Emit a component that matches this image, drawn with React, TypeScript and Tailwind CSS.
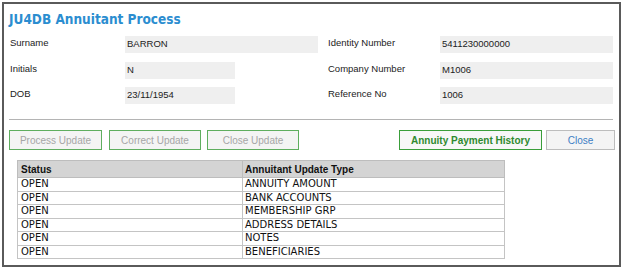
const fieldsLeft = [
  { label: "Surname", value: "BARRON", width: "w-[193px]" },
  { label: "Initials", value: "N", width: "w-[110px]" },
  { label: "DOB", value: "23/11/1954", width: "w-[110px]" },
];

const fieldsRight = [
  { label: "Identity Number", value: "5411230000000" },
  { label: "Company Number", value: "M1006" },
  { label: "Reference No", value: "1006" },
];

const updates = [
  "ANNUITY AMOUNT",
  "BANK ACCOUNTS",
  "MEMBERSHIP GRP",
  "ADDRESS DETAILS",
  "NOTES",
  "BENEFICIARIES",
];

const arial = { fontFamily: '"Liberation Sans", Arial, sans-serif' };

export default function App() {
  return (
    <div className="w-[623px] h-[269px] bg-white p-[2px]" style={arial}>
      <div className="w-[619px] h-[265px] border-2 border-[#5a5a5a] bg-white pl-[5px] pr-[4px] flex flex-col">
        <h1
          className="mt-[6px] h-[18px] leading-[18px] text-[13.5px] font-bold text-[#2b8dd0]"
          style={{ fontFamily: '"DejaVu Sans Condensed", "DejaVu Sans", Verdana, sans-serif' }}
        >
          JU4DB Annuitant Process
        </h1>

        <div className="mt-[8px] flex">
          <div className="w-[319px] flex flex-col gap-[8.5px]">
            {fieldsLeft.map((f) => (
              <div key={f.label} className="flex items-start h-[17px]">
                <span className="w-[116px] leading-[14px] text-[9.5px] text-[#222] pl-[1px]">{f.label}</span>
                <span className={`${f.width} h-[17px] bg-[#efefef] flex items-center px-[2px] text-[9.5px] text-[#222]`}>
                  {f.value}
                </span>
              </div>
            ))}
          </div>
          <div className="flex flex-col gap-[8.5px]">
            {fieldsRight.map((f) => (
              <div key={f.label} className="flex items-start h-[17px]">
                <span className="w-[112px] leading-[14px] text-[9.5px] text-[#222]">{f.label}</span>
                <span className="w-[173px] h-[17px] bg-[#efefef] flex items-center px-[2px] text-[9.5px] text-[#222]">
                  {f.value}
                </span>
              </div>
            ))}
          </div>
        </div>

        <div className="mt-[15px] mr-[2px] border-t border-[#b4b4b4]" />

        <div className="mt-[10px] flex items-center h-[20px]">
          <button className="w-[93px] h-[20px] border border-[#5fae5f] bg-[#f4f4f4] text-[10px] text-[#a6a6a6]">
            Process Update
          </button>
          <button className="ml-[7px] w-[92px] h-[20px] border border-[#5fae5f] bg-[#f4f4f4] text-[10px] text-[#a6a6a6]">
            Correct Update
          </button>
          <button className="ml-[6px] w-[92px] h-[20px] border border-[#5fae5f] bg-[#f4f4f4] text-[10px] text-[#a6a6a6]">
            Close Update
          </button>
          <button className="ml-[100px] w-[143px] h-[20px] border border-[#3a9e3a] bg-[#f7f7f7] text-[10px] font-bold text-[#2f8a2f]">
            Annuity Payment History
          </button>
          <button className="ml-[4px] w-[69px] h-[20px] border border-[#bdbdbd] bg-[#f4f4f4] text-[10px] text-[#3d7ec4]">
            Close
          </button>
        </div>

        <table className="mt-[10px] ml-[8px] w-[488px] border-collapse">
          <thead>
            <tr className="h-[17px] bg-[#d4d4d4]">
              <th className="w-[225px] border border-[#bdbdbd] text-left pl-[3px] text-[10px] font-bold text-[#111]">Status</th>
              <th className="border border-[#bdbdbd] text-left pl-[2px] text-[10px] font-bold text-[#111]">Annuitant Update Type</th>
            </tr>
          </thead>
          <tbody style={{ fontFamily: '"DejaVu Sans", Verdana, sans-serif' }}>
            {updates.map((u) => (
              <tr key={u} className="h-[13.5px]">
                <td className="border border-[#c4c4c4] pl-[3px] text-[10px] leading-[12px] text-[#111]">OPEN</td>
                <td className="border border-[#c4c4c4] pl-[2px] text-[10px] leading-[12px] text-[#111]">{u}</td>
              </tr>
            ))}
          </tbody>
        </table>
      </div>
    </div>
  );
}
